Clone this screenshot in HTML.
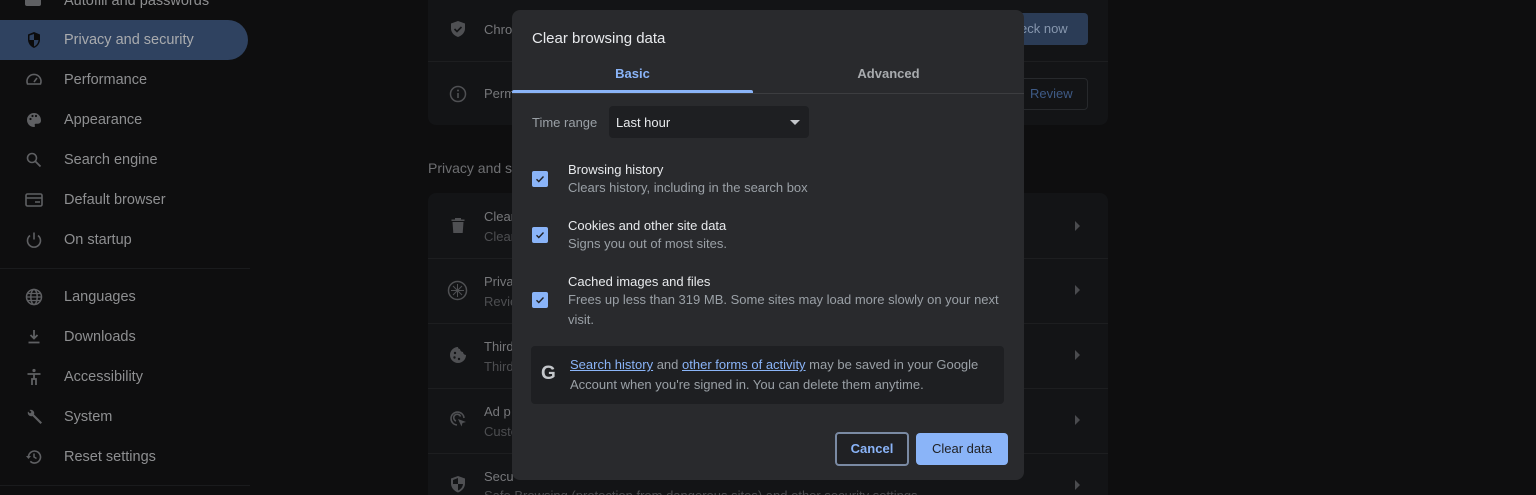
<!DOCTYPE html>
<html style="overflow:hidden"><head><meta charset="utf-8"><style>
*{box-sizing:border-box;margin:0;padding:0}
html,body{width:1536px;height:495px;overflow:hidden}
body{background:#0e0e0f;font-family:"Liberation Sans",sans-serif;position:relative}
.a{position:absolute}
.side{color:#8e8f91;font-size:14.5px}
.side .it{position:absolute;left:64px}
.ic{position:absolute;left:24px;width:20px;height:20px}
.card{background:#131416;border-radius:8px}
.row{position:absolute;left:428px;width:680px;border-top:1px solid #1d1e20}
.ct{position:absolute;left:484px;font-size:13px;color:#76777a}
.cs{position:absolute;left:484px;font-size:13px;color:#4d4e51}
.arr{position:absolute;left:1075px;width:0;height:0;border-top:5px solid transparent;border-bottom:5px solid transparent;border-left:5px solid #4a4b4e}
.dlg{position:absolute;left:512px;top:10px;width:512px;height:470px;background:#292a2d;border-radius:8px}
.cb{position:absolute;left:20px;width:16px;height:16px;background:#8ab4f8;border-radius:2px}
.cb svg{position:absolute;left:2px;top:2px}
.t1{position:absolute;left:56px;font-size:13px;color:#e8eaed}
.t2{position:absolute;left:56px;font-size:13px;color:#9aa0a6;line-height:20px}
</style></head><body>
<div class="side">
<div class="a" style="left:0;top:20px;width:248px;height:40px;background:#2f4260;border-radius:0 20px 20px 0"></div>
<div class="it" style="top:-7px">Autofill and passwords</div>
<div class="ic" style="top:-10px;left:25px;width:16px;height:16px;background:#5f6063;border-radius:2px"></div>
<svg class="ic" style="top:30px" viewBox="0 0 20 20"><path d="M10 2l6 2.5v5c0 4-2.7 7-6 8.5C6.7 16.5 4 13.5 4 9.5v-5z" fill="#0b0b0c"/><path d="M10 4v6H5.5V5.5zM10 10h4.5c-.3 3-2 5.4-4.5 6.5z" fill="#2f4260"/></svg>
<div class="it" style="top:32px;color:#a9abae">Privacy and security</div>
<svg class="ic" style="top:70px" viewBox="0 0 20 20"><path d="M3.5 14a7 7 0 1 1 13 0z" fill="none" stroke="#5f6063" stroke-width="1.6"/><path d="M10 12l3-4" stroke="#5f6063" stroke-width="1.6"/></svg>
<div class="it" style="top:72px">Performance</div>
<svg class="ic" style="top:110px" viewBox="0 0 20 20"><path d="M10 3a7 7 0 0 0 0 14c1 0 1.2-.8.8-1.5-.5-.8 0-1.8 1-1.8H14a3 3 0 0 0 3-3C17 6 14 3 10 3z" fill="#5f6063"/><circle cx="6.5" cy="9" r="1.1" fill="#0e0e0f"/><circle cx="8.5" cy="6" r="1.1" fill="#0e0e0f"/><circle cx="12" cy="6" r="1.1" fill="#0e0e0f"/></svg>
<div class="it" style="top:112px">Appearance</div>
<svg class="ic" style="top:150px" viewBox="0 0 20 20"><circle cx="8" cy="8" r="4.5" fill="none" stroke="#5f6063" stroke-width="1.6"/><path d="M11.5 11.5l5 5" stroke="#5f6063" stroke-width="1.8"/></svg>
<div class="it" style="top:152px">Search engine</div>
<svg class="ic" style="top:190px" viewBox="0 0 20 20"><rect x="2" y="4" width="16" height="12" rx="1.5" fill="none" stroke="#5f6063" stroke-width="1.6"/><path d="M2 8h16M11 12h5" stroke="#5f6063" stroke-width="1.6"/></svg>
<div class="it" style="top:192px">Default browser</div>
<svg class="ic" style="top:230px" viewBox="0 0 20 20"><path d="M6 5.5a6.5 6.5 0 1 0 8 0" fill="none" stroke="#5f6063" stroke-width="1.6"/><path d="M10 2.5v7" stroke="#5f6063" stroke-width="1.6"/></svg>
<div class="it" style="top:232px">On startup</div>
<div class="a" style="left:0;top:268px;width:250px;height:1px;background:#1a1b1d"></div>
<svg class="ic" style="top:287px" viewBox="0 0 20 20"><circle cx="10" cy="10" r="7.5" fill="none" stroke="#5f6063" stroke-width="1.5"/><ellipse cx="10" cy="10" rx="3.2" ry="7.5" fill="none" stroke="#5f6063" stroke-width="1.5"/><path d="M2.5 10h15M3.5 6.5h13M3.5 13.5h13" stroke="#5f6063" stroke-width="1.3"/></svg>
<div class="it" style="top:289px">Languages</div>
<svg class="ic" style="top:327px" viewBox="0 0 20 20"><path d="M10 3v8M6.5 8l3.5 3.5L13.5 8" fill="none" stroke="#5f6063" stroke-width="1.8"/><path d="M4.5 15.5h11" stroke="#5f6063" stroke-width="1.8"/></svg>
<div class="it" style="top:329px">Downloads</div>
<svg class="ic" style="top:367px" viewBox="0 0 20 20"><circle cx="10" cy="3.5" r="1.6" fill="#5f6063"/><path d="M3.5 7h13M10 7v5M8 18v-6h4v6" fill="none" stroke="#5f6063" stroke-width="1.8"/></svg>
<div class="it" style="top:369px">Accessibility</div>
<svg class="ic" style="top:407px" viewBox="0 0 20 20"><path d="M4 4.5a3.5 3.5 0 0 0 4.5 4.5l8 8 1.5-1.5-8-8A3.5 3.5 0 0 0 5.5 3l2 2-1.5 1.5z" fill="#5f6063"/></svg>
<div class="it" style="top:409px">System</div>
<svg class="ic" style="top:447px" viewBox="0 0 20 20"><path d="M4.5 10a6 6 0 1 1 1.8 4.3" fill="none" stroke="#5f6063" stroke-width="1.6"/><path d="M2 9l2.5 3 2.5-3z" fill="#5f6063"/><path d="M10 6.5V10l2.5 1.5" fill="none" stroke="#5f6063" stroke-width="1.5"/></svg>
<div class="it" style="top:449px">Reset settings</div>
<div class="a" style="left:0;top:485px;width:250px;height:1px;background:#1a1b1d"></div>
</div>
<div class="a card" style="left:428px;top:-10px;width:680px;height:135px"></div>
<div class="row" style="top:61px"></div>
<svg class="a" style="left:449px;top:20px" width="18" height="18" viewBox="0 0 18 18"><path d="M9 1l7 2.5v5c0 4-3 7-7 8.5C5 15.5 2 12.5 2 8.5v-5z" fill="#4f5053"/><path d="M5.5 9l2.5 2.5 4.5-4.5" fill="none" stroke="#131416" stroke-width="1.6"/></svg>
<div class="ct" style="top:22px">Chro</div>
<svg class="a" style="left:449px;top:85px" width="18" height="18" viewBox="0 0 18 18"><circle cx="9" cy="9" r="7.5" fill="none" stroke="#4f5053" stroke-width="1.5"/><path d="M9 8v5" stroke="#4f5053" stroke-width="1.6"/><circle cx="9" cy="5.5" r="1" fill="#4f5053"/></svg>
<div class="ct" style="top:86px">Perm</div>
<div class="a" style="left:1000px;top:13px;width:88px;height:32px;background:#2b3c56;border-radius:4px;color:#8797ae;font-size:13px;line-height:32px;padding-left:20px">eck now</div>
<div class="a" style="left:1000px;top:78px;width:88px;height:32px;border:1px solid #27292c;border-radius:4px;color:#3e5a85;font-size:13px;line-height:30px;padding-left:29px">Review</div>
<div class="a" style="left:428px;top:160px;font-size:14px;color:#6e6f72">Privacy and s</div>
<div class="a card" style="left:428px;top:193px;width:680px;height:310px"></div>
<div class="row" style="top:258px"></div><div class="row" style="top:323px"></div><div class="row" style="top:388px"></div><div class="row" style="top:453px"></div>
<svg class="a" style="left:451px;top:217px" width="14" height="17" viewBox="0 0 14 17"><path d="M4 1h6v1.5h3.5V4H.5V2.5H4z" fill="#4f5053"/><path d="M1.5 5h11l-.8 11H2.3z" fill="#4f5053"/></svg>
<div class="ct" style="top:209px">Clear</div><div class="cs" style="top:229px">Clear</div>
<svg class="a" style="left:447px;top:280px" width="21" height="21" viewBox="0 0 21 21"><circle cx="10.5" cy="10.5" r="9" fill="none" stroke="#4f5053" stroke-width="1.5"/><path d="M10.5 4v13M4 10.5h13M6 6l9 9M15 6l-9 9" stroke="#4f5053" stroke-width="1"/></svg>
<div class="ct" style="top:274px">Priva</div><div class="cs" style="top:294px">Revie</div>
<svg class="a" style="left:449px;top:346px" width="18" height="18" viewBox="0 0 18 18"><path d="M9 1a8 8 0 1 0 8 8 3 3 0 0 1-3-3 3 3 0 0 1-3-3 2 2 0 0 1-2-2z" fill="#4f5053"/><circle cx="6" cy="7" r="1.2" fill="#131416"/><circle cx="5.5" cy="11.5" r="1.2" fill="#131416"/><circle cx="10" cy="13" r="1.2" fill="#131416"/></svg>
<div class="ct" style="top:339px">Third</div><div class="cs" style="top:359px">Third</div>
<svg class="a" style="left:449px;top:410px" width="18" height="18" viewBox="0 0 18 18"><path d="M15 8a6.5 6.5 0 1 0-7 7" fill="none" stroke="#4f5053" stroke-width="1.6"/><path d="M11.5 6.5A3.5 3.5 0 1 0 7 11" fill="none" stroke="#4f5053" stroke-width="1.6"/><path d="M9 9l8 3-3.5 1-1 3.5z" fill="#4f5053"/></svg>
<div class="ct" style="top:404px">Ad p</div><div class="cs" style="top:424px">Custo</div>
<svg class="a" style="left:450px;top:475px" width="16" height="19" viewBox="0 0 16 19"><path d="M8 1l7 2.5v5c0 4-3 7.5-7 9C4 16 1 12.5 1 8.5v-5z" fill="#4f5053"/><path d="M8 3v6H3V5zM8 9h5c-.3 3-2.3 5.4-5 6.5z" fill="#131416"/></svg>
<div class="ct" style="top:469px">Secu</div><div class="cs" style="top:488px">Safe Browsing (protection from dangerous sites) and other security settings</div>
<div class="arr" style="top:221px"></div><div class="arr" style="top:285px"></div><div class="arr" style="top:350px"></div><div class="arr" style="top:415px"></div><div class="arr" style="top:480px"></div>
<div class="dlg">
<div class="a" style="left:20px;top:20px;font-size:15px;color:#e8eaed">Clear browsing data</div>
<div class="a" style="left:0;top:56px;width:241px;text-align:center;font-size:13px;color:#8ab4f8;font-weight:bold">Basic</div>
<div class="a" style="left:241px;top:56px;width:271px;text-align:center;font-size:13px;color:#a8abae;font-weight:bold">Advanced</div>
<div class="a" style="left:0;top:83px;width:512px;height:1px;background:#3c3d40"></div>
<div class="a" style="left:0;top:80px;width:241px;height:3px;background:#8ab4f8;border-radius:2px 2px 0 0"></div>
<div class="a" style="left:20px;top:105px;font-size:13px;color:#9aa0a6">Time range</div>
<div class="a" style="left:97px;top:96px;width:200px;height:32px;background:#1e1f22;border-radius:4px"><span class="a" style="left:7px;top:9px;font-size:13px;color:#e8eaed">Last hour</span><span class="a" style="left:181px;top:14px;border-left:5px solid transparent;border-right:5px solid transparent;border-top:5px solid #c4c7cb"></span></div>
<div class="cb" style="top:161px"><svg width="12" height="12" viewBox="0 0 12 12"><path d="M2.5 6.2l2.3 2.3L9.5 3.5" fill="none" stroke="#202124" stroke-width="1.4"/></svg></div>
<div class="t1" style="top:152px">Browsing history</div><div class="t2" style="top:168px">Clears history, including in the search box</div>
<div class="cb" style="top:217px"><svg width="12" height="12" viewBox="0 0 12 12"><path d="M2.5 6.2l2.3 2.3L9.5 3.5" fill="none" stroke="#202124" stroke-width="1.4"/></svg></div>
<div class="t1" style="top:208px">Cookies and other site data</div><div class="t2" style="top:224px">Signs you out of most sites.</div>
<div class="cb" style="top:282px"><svg width="12" height="12" viewBox="0 0 12 12"><path d="M2.5 6.2l2.3 2.3L9.5 3.5" fill="none" stroke="#202124" stroke-width="1.4"/></svg></div>
<div class="t1" style="top:264px">Cached images and files</div><div class="t2" style="top:280px;width:440px">Frees up less than 319 MB. Some sites may load more slowly on your next visit.</div>
<div class="a" style="left:19px;top:336px;width:473px;height:58px;background:#1e1f22;border-radius:4px">
<div class="a" style="left:10px;top:17px;font-size:19px;font-weight:bold;color:#c4c7cb">G</div>
<div class="a" style="left:39px;top:9px;width:420px;font-size:13px;line-height:20px;color:#9aa0a6"><u style="color:#8ab4f8">Search history</u> and <u style="color:#8ab4f8">other forms of activity</u> may be saved in your Google Account when you're signed in. You can delete them anytime.</div>
</div>
<div class="a" style="left:323px;top:422px;width:74px;height:34px;border:2px solid #7a8aa3;border-radius:4px;font-size:13px;color:#8ab4f8;font-weight:bold;text-align:center;line-height:30px;background:#202124">Cancel</div>
<div class="a" style="left:404px;top:423px;width:92px;height:32px;background:#8ab4f8;border-radius:4px;font-size:13px;color:#202124;text-align:center;line-height:32px">Clear data</div>
</div>
</body></html>
